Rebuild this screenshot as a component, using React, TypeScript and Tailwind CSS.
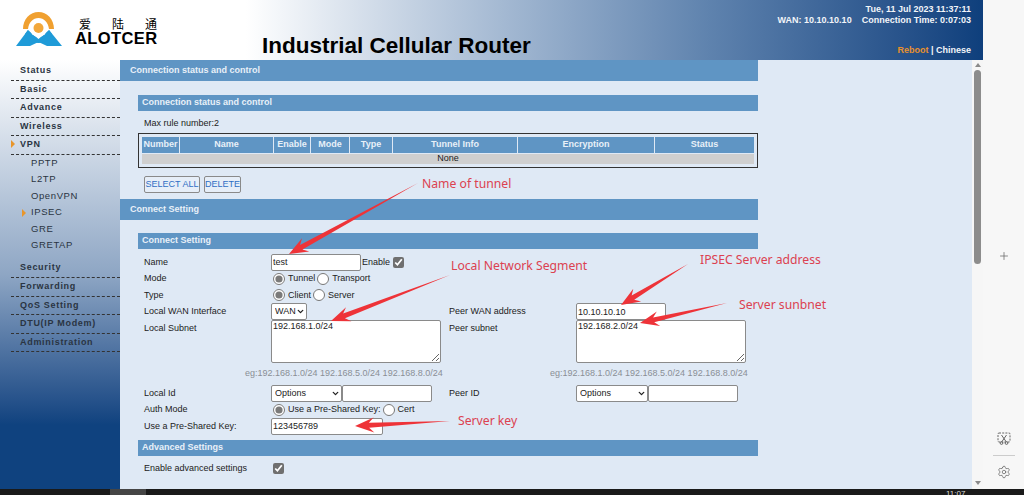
import { ChevronDown, Plus, Settings } from 'lucide-react'

const mainNavTop = ['Status', 'Basic', 'Advance', 'Wireless']
const vpnItems = ['PPTP', 'L2TP', 'OpenVPN', 'IPSEC', 'GRE', 'GRETAP']
const mainNavBottom = ['Security', 'Forwarding', 'QoS Setting', 'DTU(IP Modem)', 'Administration']

const columns = [
  { label: 'Number', width: 'w-[37px]' },
  { label: 'Name', width: 'w-[93px]' },
  { label: 'Enable', width: 'w-[36px]' },
  { label: 'Mode', width: 'w-[38px]' },
  { label: 'Type', width: 'w-[42px]' },
  { label: 'Tunnel Info', width: 'w-[124px]' },
  { label: 'Encryption', width: 'w-[136px]' },
  { label: 'Status', width: 'flex-1' },
]

const arrows: [number, number, number, number][] = [
  [418, 183, 289, 254],
  [450, 275, 331, 321],
  [688, 264, 621, 305],
  [727, 303, 640, 323],
  [450, 421, 355, 426],
]

const notes = [
  { text: 'Name of tunnel', pos: 'left-[422px] top-[176px]' },
  { text: 'Local Network Segment', pos: 'left-[451px] top-[258px]' },
  { text: 'IPSEC Server address', pos: 'left-[700px] top-[252px]' },
  { text: 'Server sunbnet', pos: 'left-[739px] top-[297px]' },
  { text: 'Server key', pos: 'left-[458px] top-[413px]' },
]

function arrowPoints([x1, y1, x2, y2]: [number, number, number, number]) {
  const len = Math.hypot(x2 - x1, y2 - y1)
  const ux = (x2 - x1) / len
  const uy = (y2 - y1) / len
  const at = (back: number, side: number) =>
    `${x2 - ux * back - uy * side},${y2 - uy * back + ux * side}`
  return [`${x1},${y1}`, at(14, 2.5), at(19, 7.5), `${x2},${y2}`, at(19, -7.5), at(14, -2.5)].join(' ')
}

function NavItem({ label, active }: { label: string; active?: boolean }) {
  return (
    <div className="relative ml-[11px] flex h-[18.6px] items-center border-b border-dashed border-[#333] pl-[9px] text-[9px] font-bold tracking-[0.7px] text-[#2a3442]">
      {active && <span className="absolute left-0 top-[4px] h-0 w-0 border-y-[4px] border-l-[4px] border-y-transparent border-l-[#e8962c]" />}
      {label}
    </div>
  )
}

function Bar({ title, small }: { title: string; small?: boolean }) {
  return small ? (
    <div className="ml-[18px] flex h-[16px] items-center bg-[#5f95c4] pl-[4px] text-[9px] font-bold text-[#e8f0f8]">{title}</div>
  ) : (
    <div className="flex h-[21px] items-center bg-[#5f95c4] pl-[10px] text-[9px] font-bold text-[#e8f0f8]">{title}</div>
  )
}

function Row({ label, children, peer }: { label: string; children?: React.ReactNode; peer?: React.ReactNode }) {
  return (
    <div className="flex h-[16.5px] items-center pl-[24px] text-[9px] text-[#222]">
      <div className="flex w-[305px] items-center">
        <span className="w-[127px] shrink-0">{label}</span>
        {children}
      </div>
      {peer}
    </div>
  )
}

function Peer({ label, children }: { label: string; children?: React.ReactNode }) {
  return (
    <div className="flex items-center">
      <span className="w-[127px] shrink-0">{label}</span>
      {children}
    </div>
  )
}

const inputCls = 'h-[17px] rounded-[2px] border border-[#8a8a8a] bg-white px-[1px] text-[9px] text-[#222] outline-none'
const areaCls = 'h-[43px] w-[170px] rounded-[2px] border border-[#8a8a8a] bg-white px-[1px] text-[9px] leading-[11px] text-[#222] outline-none'

function Select({ value, width }: { value: string; width: string }) {
  return (
    <div className={`relative h-[17px] ${width}`}>
      <select className="h-full w-full appearance-none rounded-[2px] border border-[#8a8a8a] bg-white pl-[3px] text-[9px] text-[#222]">
        <option>{value}</option>
      </select>
      <ChevronDown size={9} strokeWidth={3.5} className="pointer-events-none absolute right-[2px] top-[4px] text-[#222]" />
    </div>
  )
}

function Radio({ name, label, checked }: { name: string; label: string; checked?: boolean }) {
  return (
    <label className="flex items-center gap-[3px]">
      <input type="radio" name={name} defaultChecked={checked} className="m-0 h-[12px] w-[12px] accent-[#7a7a7a]" />
      {label}
    </label>
  )
}

function Logo() {
  return (
    <svg width="48" height="36" viewBox="0 0 48 36">
      <path d="M8 17C8 7 15 0 23.500 0S39 7 39 17h-5C33 10 29 6 23.500 6S14 10 13 17z" fill="#f0a030" />
      <path d="M1 34 13 18l10.500 9L34 18l13 16H32l-8.500-4L15 34z" fill="#1f9bd8" />
      <circle cx="23.500" cy="16" r="9" fill="#fff" />
      <circle cx="23.500" cy="16" r="5" fill="#f2a73a" />
      <path d="M13 18c1 6 5 10 10.500 10S33 24 34 18l3 4c-2 6-7 9-13.500 9S12 28 10 22z" fill="#1f9bd8" />
    </svg>
  )
}

function CaptureIcon() {
  return (
    <svg width="14" height="14" viewBox="0 0 14 14" fill="none" stroke="#666" strokeWidth="1">
      <rect x="1" y="1" width="12" height="9" rx="1" strokeDasharray="2 1.2" />
      <path d="M4.500 3 9 9.500M9.500 3 5 9.500" />
      <circle cx="4.500" cy="11" r="1.400" />
      <circle cx="9.500" cy="11" r="1.400" />
    </svg>
  )
}

export default function App() {
  return (
    <div className="relative flex h-[495px] w-[1024px] flex-col overflow-hidden bg-[#f7f7f7] font-['Liberation_Sans',Arial,sans-serif]">
      <div className="flex h-[489px]">
        <div className="flex w-[983px] flex-col">
          {/* Header */}
          <header className="flex h-[60px] bg-gradient-to-r from-white from-25% via-[#5f83ae] via-72% to-[#0e3f7c]">
            <div className="flex w-[262px] items-start pl-[15px] pt-[12px]">
              <Logo />
              <div className="ml-[12px] mt-[5px] flex w-[86px] flex-col gap-[1px] text-black">
                <div className="flex justify-between px-[4px] font-['Noto_Sans_CJK_SC',sans-serif] text-[12px] leading-[13px]">
                  <span>爱</span>
                  <span>陆</span>
                  <span>通</span>
                </div>
                <span className="text-[16.5px] font-bold leading-[15px] tracking-[0.4px]">ALOTCER</span>
              </div>
            </div>
            <div className="flex-1 pt-[33px] text-[22.5px] font-bold leading-[25px] text-black">Industrial Cellular Router</div>
            <div className="flex flex-col items-end pr-[12px] pt-[4px] text-[9px] font-bold leading-[10.5px] text-[#f2f5f9]">
              <span>Tue, 11 Jul 2023 11:37:11</span>
              <span className="whitespace-pre">WAN: 10.10.10.10    Connection Time: 0:07:03</span>
              <span className="mt-[20px]">
                <span className="text-[#e8912d]">Reboot</span> | Chinese
              </span>
            </div>
          </header>

          <div className="flex min-h-0 flex-1">
            {/* Left menu */}
            <nav className="w-[120px] bg-gradient-to-b from-white from-0% via-[#8ea6c4] via-50% to-[#0f427f] to-85% pt-[2px]">
              {mainNavTop.map((item) => (
                <NavItem key={item} label={item} />
              ))}
              <NavItem label="VPN" active />
              <div className="flex flex-col pb-[6px] pl-[31px]">
                {vpnItems.map((item) => (
                  <div key={item} className="relative flex h-[16.4px] items-center text-[9.5px] tracking-[0.6px] text-[#2a3442]">
                    {item === 'IPSEC' && <span className="absolute left-[-9px] top-[5px] h-0 w-0 border-y-[4px] border-l-[4px] border-y-transparent border-l-[#e8962c]" />}
                    {item}
                  </div>
                ))}
              </div>
              {mainNavBottom.map((item) => (
                <NavItem key={item} label={item} />
              ))}
            </nav>

            {/* Content */}
            <main className="min-w-0 flex-1 overflow-hidden bg-[#dfe9f5]">
              <div className="w-[638px]">
                <Bar title="Connection status and control" />
                <div className="mt-[14px]">
                  <Bar title="Connection status and control" small />
                </div>
                <div className="ml-[24px] flex h-[22px] items-center pt-[4px] text-[9px] text-[#222]">Max rule number:2</div>
                <div className="ml-[18px] border border-[#333] p-[3px]">
                  <div className="flex gap-[1px] bg-[#dfe9f5]">
                    {columns.map((c) => (
                      <div key={c.label} className={`${c.width} flex h-[16px] items-center justify-center bg-[#5f95c4] text-[9px] font-bold text-[#e8f0f8]`}>
                        {c.label}
                      </div>
                    ))}
                  </div>
                  <div className="mt-[1px] flex h-[10px] items-center justify-center bg-[#cfcfcf] text-[9px] text-[#222]">None</div>
                </div>
                <div className="ml-[24px] mt-[8px] flex gap-[4px]">
                  <button className="h-[17px] w-[56px] whitespace-nowrap rounded-[2px] border border-[#8a8a8a] bg-[#e6eef8] text-[9px] text-[#2f6fc4]">SELECT ALL</button>
                  <button className="h-[17px] w-[37px] rounded-[2px] border border-[#8a8a8a] bg-[#e6eef8] text-[9px] text-[#2f6fc4]">DELETE</button>
                </div>
                <div className="mt-[6px]">
                  <Bar title="Connect Setting" />
                </div>
                <div className="mt-[13px]">
                  <Bar title="Connect Setting" small />
                </div>

                <div className="mt-[5px]">
                  <Row label="Name">
                    <input readOnly defaultValue="test" className={`${inputCls} w-[90px]`} />
                    <span className="ml-[1px]">Enable</span>
                    <input type="checkbox" defaultChecked className="ml-[3px] h-[11px] w-[11px] accent-[#6f6f6f]" />
                  </Row>
                  <Row label="Mode">
                    <div className="flex gap-[2px] pl-[2px]">
                      <Radio name="mode" label="Tunnel" checked />
                      <Radio name="mode" label="Transport" />
                    </div>
                  </Row>
                  <Row label="Type">
                    <div className="flex gap-[2px] pl-[2px]">
                      <Radio name="type" label="Client" checked />
                      <Radio name="type" label="Server" />
                    </div>
                  </Row>
                  <Row
                    label="Local WAN Interface"
                    peer={
                      <Peer label="Peer WAN address">
                        <input readOnly defaultValue="10.10.10.10" className={`${inputCls} w-[90px]`} />
                      </Peer>
                    }
                  >
                    <Select value="WAN" width="w-[36px]" />
                  </Row>
                </div>

                <div className="flex pl-[24px] text-[9px] text-[#222]">
                  <div className="flex w-[305px]">
                    <span className="w-[127px] shrink-0 pt-[2px]">Local Subnet</span>
                    <textarea readOnly defaultValue="192.168.1.0/24" className={areaCls} />
                  </div>
                  <div className="flex">
                    <span className="w-[127px] shrink-0 pt-[2px]">Peer subnet</span>
                    <textarea readOnly defaultValue="192.168.2.0/24" className={areaCls} />
                  </div>
                </div>

                <div className="flex h-[22px] items-center whitespace-nowrap pl-[125px] text-[9px] text-[#8a8f96]">
                  <span className="w-[305px]">eg:192.168.1.0/24 192.168.5.0/24 192.168.8.0/24</span>
                  <span>eg:192.168.1.0/24 192.168.5.0/24 192.168.8.0/24</span>
                </div>

                <Row
                  label="Local Id"
                  peer={
                    <Peer label="Peer ID">
                      <Select value="Options" width="w-[72px]" />
                      <input readOnly className={`${inputCls} w-[90px]`} />
                    </Peer>
                  }
                >
                  <Select value="Options" width="w-[71px]" />
                  <input readOnly className={`${inputCls} w-[90px]`} />
                </Row>
                <Row label="Auth Mode">
                  <div className="flex gap-[2px] pl-[2px]">
                    <Radio name="auth" label="Use a Pre-Shared Key:" checked />
                    <Radio name="auth" label="Cert" />
                  </div>
                </Row>
                <Row label="Use a Pre-Shared Key:">
                  <input readOnly defaultValue="123456789" className={`${inputCls} w-[112px]`} />
                </Row>
                <div className="mt-[5px]">
                  <Bar title="Advanced Settings" small />
                </div>
                <div className="mt-[5px]">
                  <Row label="Enable advanced settings">
                    <input type="checkbox" defaultChecked className="ml-[2px] h-[11px] w-[11px] accent-[#6f6f6f]" />
                  </Row>
                </div>
              </div>
            </main>

            {/* Scrollbar */}
            <div className="flex w-[11px] flex-col items-center bg-[#f6f6f6] pt-[3px]">
              <span className="h-0 w-0 border-x-[3px] border-b-[4px] border-x-transparent border-b-[#8a8a8a]" />
              <span className="mt-[3px] h-[194px] w-[7px] rounded-full bg-[#8c8c8c]" />
              <span className="mt-auto mb-[4px] h-0 w-0 border-x-[3px] border-t-[4px] border-x-transparent border-t-[#8a8a8a]" />
            </div>
          </div>
        </div>

        {/* Browser side panel */}
        <aside className="flex w-[41px] flex-col items-center pt-[250px] text-[#666]">
          <Plus size={12} strokeWidth={1.5} />
          <div className="mt-auto flex flex-col items-center pb-[10px]">
            <CaptureIcon />
            <span className="my-[9px] h-px w-[22px] bg-[#ccc]" />
            <Settings size={14} strokeWidth={1.3} />
          </div>
        </aside>
      </div>

      {/* Taskbar sliver */}
      <div className="flex h-[6px] overflow-hidden bg-[#1a1a1a]">
        <span className="ml-[110px] h-full w-[36px] bg-[#454545]" />
        <span className="ml-[800px] text-[8px] leading-[9px] text-[#ddd]">11:07</span>
      </div>

      {/* Red annotations drawn on top of the screenshot */}
      <svg className="pointer-events-none absolute left-0 top-0" width="1024" height="495">
        {arrows.map((a) => (
          <polygon key={a.join()} points={arrowPoints(a)} fill="#ee3338" />
        ))}
      </svg>
      {notes.map((n) => (
        <span key={n.text} className={`absolute ${n.pos} font-['Noto_Sans',sans-serif] text-[12.2px] leading-[16px] text-[#dc4150]`}>
          {n.text}
        </span>
      ))}
    </div>
  )
}
